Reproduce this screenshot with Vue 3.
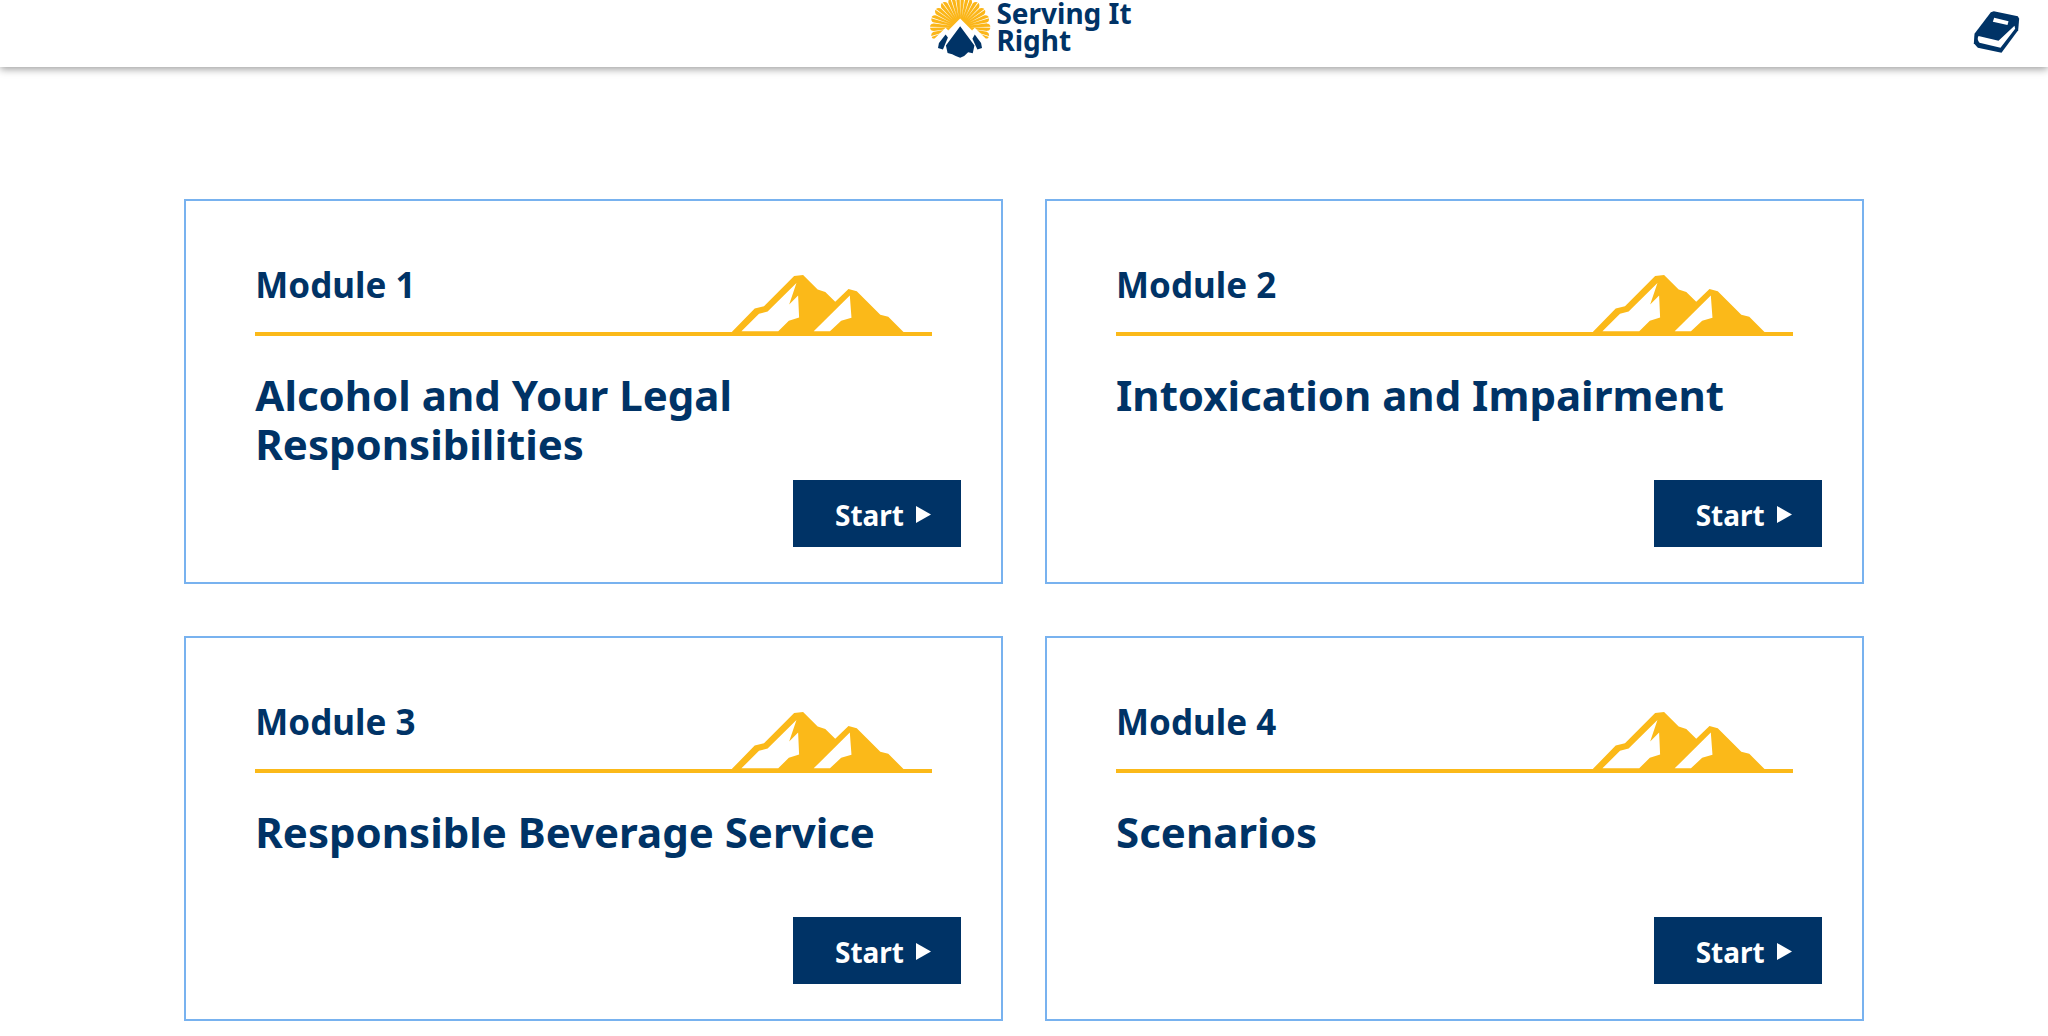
<template>
  <div class="page">
    <header class="top-bar">
      <a href="#" class="brand">
        <svg class="brand-mark" viewBox="34 0 184 175" aria-hidden="true">
          <circle cx="125" cy="82" r="82" fill="#fbb619" />
          <circle v-for="(dot, i) in scallops" :key="'s' + i" :cx="dot.x" :cy="dot.y" r="11" fill="#fbb619" />
          <path v-for="line in rayLines" :key="line" :d="line" fill="#fff" />
          <path d="M125 56 L161 92 L169 84 L202 116 L222 120 L222 180 L30 180 L30 120 L48 116 L81 84 L89 92 Z" fill="#fff" />
          <path d="M125 79 L168 137 L163 161 L149 158 Q140 170 125 174 Q110 170 101 164 L87 160 L82 137 Z" fill="#003366" />
          <path d="M81 104 L88 113 L73 149 L58 145 L61 130 Z" fill="#003366" />
          <path d="M169 104 L188 130 L191 145 L177 149 L162 117 Z" fill="#003366" />
        </svg>
        <span class="brand-name">Serving It<br />Right</span>
      </a>
      <button class="book-btn" type="button" aria-label="Resources">
        <svg class="book-icon" viewBox="68 30 140 132" aria-hidden="true">
          <path d="M130 34 L202 49 L206 56 L203 91 L153 158 L82 143 L70 130 L72 101 L121 37 Z" fill="#003366" />
          <path d="M84 108 L144 122 L192 77 L194 86 L150 143 L87 128 Q78 118 84 108 Z" fill="#fff" />
          <path d="M131 53 L174 64 L171 75 L127 65 Z" fill="#fff" />
        </svg>
      </button>
    </header>

    <main class="modules">
      <section v-for="mod in modules" :key="mod.id" class="card">
        <div class="card-head">
          <h2 class="card-label">Module {{ mod.id }}</h2>
          <svg class="mountains" viewBox="66 46 516 172" aria-hidden="true">
            <path
              fill="#fbb919"
              fill-rule="evenodd"
              d="M64 218 L133 147 L161 140 L252 49 L279 46 L323 90 L346 97 L376 127 L416 88 L441 95 L512 166 L536 172 L582 218 Z M93 216 L146 163 L172 156 L259 70 L237 135 L264 108 L267 174 L236 184 L204 216 Z M311 216 L420 108 L425 175 L394 184 L360 216 Z"
            />
          </svg>
        </div>
        <h3 class="card-title">{{ mod.title }}</h3>
        <button class="start-btn" type="button">
          Start
          <svg class="play" viewBox="0 0 15 17" aria-hidden="true"><path d="M0 0 L15 8.5 L0 17 Z" fill="#fff" /></svg>
        </button>
      </section>
    </main>
  </div>
</template>

<script setup>
const modules = [
  { id: 1, title: 'Alcohol and Your Legal Responsibilities' },
  { id: 2, title: 'Intoxication and Impairment' },
  { id: 3, title: 'Responsible Beverage Service' },
  { id: 4, title: 'Scenarios' }
]

// Sun: a scalloped disc cut by thin white rays
const point = (deg, r) => {
  const a = (deg * Math.PI) / 180
  return { x: (125 + r * Math.sin(a)).toFixed(1), y: (82 - r * Math.cos(a)).toFixed(1) }
}

const scallops = []
const rayLines = []
for (let deg = -108; deg <= 108; deg += 18) {
  scallops.push(point(deg, 80))
}
for (let deg = -117; deg <= 117; deg += 9) {
  const from = point(deg, 30)
  const left = point(deg - 1, 94)
  const right = point(deg + 1, 94)
  rayLines.push(`M${from.x} ${from.y} L${left.x} ${left.y} L${right.x} ${right.y} Z`)
}
</script>

<style>
body {
  margin: 0;
  background: #ffffff;
}
</style>

<style scoped>
.page {
  font-family: 'Noto Sans', sans-serif;
  color: #003366;
}

.top-bar {
  display: grid;
  grid-template-columns: 1fr auto 1fr;
  align-items: start;
  height: 67px;
  box-shadow: 0 2px 8px rgba(0, 0, 0, 0.4);
}

.brand {
  grid-column: 2;
  display: flex;
  gap: 5px;
  padding-left: 14px;
  color: #003366;
  text-decoration: none;
}

.brand-mark {
  width: 61px;
  height: 58px;
}

.brand-name {
  font-size: 28px;
  font-weight: 700;
  line-height: 27px;
}

.book-btn {
  justify-self: end;
  margin: 10px 28px 0 0;
  padding: 0;
  border: none;
  background: none;
  cursor: pointer;
}

.book-icon {
  display: block;
  width: 47px;
  height: 44px;
}

.modules {
  display: grid;
  grid-template-columns: 1fr 1fr;
  gap: 52px 42px;
  padding: 132px 9% 16px;
}

.card {
  display: flex;
  flex-direction: column;
  box-sizing: border-box;
  min-height: 385px;
  padding: 63px 40px 35px 69px;
  border: 2px solid #78b2ef;
}

.card-head {
  display: flex;
  justify-content: space-between;
  align-items: flex-end;
  height: 68px;
  margin-right: 29px;
  border-bottom: 4px solid #fbb919;
}

.card-label {
  margin: 0;
  align-self: flex-start;
  font-size: 35px;
  font-weight: 700;
  line-height: 42px;
}

.mountains {
  width: 172px;
  height: 57px;
  margin-right: 28px;
}

.card-title {
  margin: 34px 29px 0 0;
  font-size: 42px;
  font-weight: 700;
  line-height: 49px;
}

.start-btn {
  display: flex;
  align-items: center;
  justify-content: space-between;
  align-self: flex-end;
  width: 168px;
  height: 67px;
  margin-top: auto;
  padding: 2px 30px 0 42px;
  border: none;
  background: #003366;
  color: #ffffff;
  font-family: inherit;
  font-size: 28px;
  font-weight: 700;
  cursor: pointer;
}

.play {
  width: 15px;
  height: 17px;
}

@media (max-width: 1100px) {
  .modules {
    grid-template-columns: 1fr;
  }
}
</style>
